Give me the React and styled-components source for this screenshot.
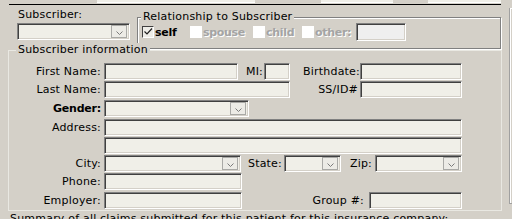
import React from "react";
import styled, { createGlobalStyle } from "styled-components";

const Global = createGlobalStyle`
  html, body {
    margin: 0;
    padding: 0;
    background: #d4d0c8;
    font-family: "DejaVu Sans", Verdana, sans-serif;
    font-size: 11px;
    letter-spacing: 0.2px;
    color: #000;
    overflow: hidden;
  }
`;

const Page = styled.div`
  display: flex;
  width: 512px;
  height: 219px;
  overflow: hidden;
`;

const Main = styled.div`
  width: 509px;
  flex: none;
`;

const SideEdge = styled.div`
  flex: 1;
  margin-top: 8px;
  height: 195px;
  border-left: 1px solid #a0a0a0;
  border-bottom: 1px solid #a0a0a0;
  box-shadow: inset 1px 1px 0 #fff;
`;

const TopStrip = styled.div`
  display: flex;
  height: 4px;
`;

const Stub = styled.div`
  margin-left: ${(p) => p.$ml}px;
  width: ${(p) => p.$w}px;
  height: 2px;
  background: #f0efe8;
  border-bottom: 1px solid #fff;
`;

const Rule = styled.div`
  margin-left: 9px;
  width: 492px;
  height: 1px;
  background: #000;
`;

const TopRow = styled.div`
  display: flex;
  height: 44px;
`;

const SubscriberCol = styled.div`
  display: flex;
  flex-direction: column;
  margin-left: 17px;
  padding-top: 3px;
  width: 113px;
`;

const Caption = styled.div`
  line-height: 13px;
  margin-left: 1px;
  margin-bottom: 2px;
`;

const Group = styled.div`
  display: flex;
  flex-direction: column;
  margin-left: ${(p) => p.$ml}px;
  margin-top: ${(p) => p.$mt}px;
  width: ${(p) => p.$w}px;
  height: ${(p) => p.$h}px;
  box-sizing: border-box;
  border: 1px solid ${(p) => (p.$light ? "#e9e8e2" : "#808080")};
  box-shadow: ${(p) =>
    p.$light ? "none" : "inset 1px 1px 0 #fff, 1px 1px 0 #fff"};
`;

const Legend = styled.div`
  align-self: flex-start;
  margin-top: -8px;
  margin-left: ${(p) => p.$ml}px;
  padding: 0 2px;
  line-height: 13px;
  background: #d4d0c8;
  white-space: nowrap;
`;

const CheckRow = styled.div`
  display: flex;
  align-items: center;
  height: 18px;
  padding-left: 4px;
`;

const CheckItem = styled.div`
  display: flex;
  align-items: center;
  width: ${(p) => p.$w}px;
  flex: none;
`;

const Box = styled.div`
  width: 12px;
  height: 12px;
  box-sizing: border-box;
  flex: none;
  background: ${(p) => (p.$on ? "#eeede8" : "#fff")};
  border: ${(p) => (p.$on ? "1px solid" : "none")};
  border-color: #404040 #fff #fff #404040;
  display: flex;
  align-items: center;
  justify-content: center;
`;

const CheckText = styled.span`
  font-weight: bold;
  margin-left: 1px;
  color: ${(p) => (p.$off ? "#a4a4a4" : "#000")};
  text-shadow: ${(p) => (p.$off ? "1px 1px 0 #fff" : "none")};
  letter-spacing: -0.3px;
`;

const Field = styled.div`
  flex: none;
  width: ${(p) => p.$w}px;
  height: ${(p) => p.$h || 17}px;
  box-sizing: border-box;
  background: ${(p) => p.$bg || "#f0efe8"};
  border: 1px solid;
  border-color: #808080 #fff #fff #808080;
  box-shadow: inset 1px 1px 0 #404040, inset -1px -1px 0 #d4d0c8;
  display: flex;
  justify-content: flex-end;
  align-items: center;
  padding-right: 2px;
`;

const DropBtn = styled.div`
  width: 16px;
  height: 13px;
  box-sizing: border-box;
  background: #ecebe6;
  border: 1px solid #a9a9a6;
  display: flex;
  align-items: flex-end;
  justify-content: center;
  padding-bottom: 2px;
`;

const Form = styled.div`
  display: flex;
  flex-direction: column;
  padding-top: 7px;
`;

const Row = styled.div`
  display: flex;
  height: ${(p) => p.$h}px;
`;

const Label = styled.div`
  flex: none;
  width: ${(p) => p.$w}px;
  padding-right: ${(p) => p.$pr || 0}px;
  box-sizing: border-box;
  text-align: right;
  line-height: 17px;
  font-weight: ${(p) => (p.$bold ? "bold" : "normal")};
  letter-spacing: ${(p) => (p.$bold ? "-0.2px" : "0.2px")};
  white-space: nowrap;
`;

const Summary = styled.div`
  margin-left: 10px;
  margin-top: 1px;
  line-height: 13px;
  white-space: nowrap;
`;

function Chevron() {
  return (
    <svg width="7" height="4" viewBox="0 0 7 4">
      <path d="M0.5 0.5 L3.5 3.5 L6.5 0.5" fill="none" stroke="#7a7a7a" strokeWidth="1" />
    </svg>
  );
}

function Select({ w }) {
  return (
    <Field $w={w}>
      <DropBtn>
        <Chevron />
      </DropBtn>
    </Field>
  );
}

function Check({ w, label, on, off }) {
  return (
    <CheckItem $w={w}>
      <Box $on={on}>
        {on && (
          <svg width="10" height="10" viewBox="0 0 10 10">
            <path d="M1.5 4.5 L4 7 L9 1.5" fill="none" stroke="#202020" strokeWidth="1.2" />
          </svg>
        )}
      </Box>
      <CheckText $off={off}>{label}</CheckText>
    </CheckItem>
  );
}

export default function App() {
  return (
    <>
      <Global />
      <Page>
        <Main>
          <TopStrip>
            <Stub $ml={97} $w={158} />
            <Stub $ml={66} $w={72} />
            <Stub $ml={35} $w={73} />
          </TopStrip>
          <Rule />
          <TopRow>
            <SubscriberCol>
              <Caption>Subscriber:</Caption>
              <Select w={113} />
            </SubscriberCol>
            <Group $ml={7} $mt={12} $w={364} $h={32}>
              <Legend $ml={3}>Relationship to Subscriber</Legend>
              <CheckRow>
                <Check w={48} label="self" on />
                <Check w={63} label="spouse" off />
                <Check w={49} label="child" off />
                <Check w={54} label="other:" off />
                <Field $w={50} $h={18} $bg="#efefef" />
              </CheckRow>
            </Group>
          </TopRow>
          <Group $light $ml={8} $mt={1} $w={494} $h={161}>
            <Legend $ml={7}>Subscriber information</Legend>
            <Form>
              <Row $h={18}>
                <Label $w={95} $pr={3}>First Name:</Label>
                <Field $w={134} />
                <Label $w={26} $pr={1}>MI:</Label>
                <Field $w={26} />
                <Label $w={70} $pr={0}>Birthdate:</Label>
                <Field $w={102} />
              </Row>
              <Row $h={19}>
                <Label $w={95} $pr={3}>Last Name:</Label>
                <Field $w={186} />
                <Label $w={70} $pr={2}>SS/ID#</Label>
                <Field $w={102} />
              </Row>
              <Row $h={19}>
                <Label $w={95} $pr={3} $bold>Gender:</Label>
                <Select w={145} />
              </Row>
              <Row $h={18}>
                <Label $w={95} $pr={3}>Address:</Label>
                <Field $w={358} />
              </Row>
              <Row $h={18}>
                <Label $w={95} />
                <Field $w={358} />
              </Row>
              <Row $h={18}>
                <Label $w={95} $pr={3}>City:</Label>
                <Select w={137} />
                <Label $w={43} $pr={2}>State:</Label>
                <Select w={57} />
                <Label $w={34} $pr={3}>Zip:</Label>
                <Select w={87} />
              </Row>
              <Row $h={19}>
                <Label $w={95} $pr={3}>Phone:</Label>
                <Field $w={138} />
              </Row>
              <Row $h={17}>
                <Label $w={95} $pr={3}>Employer:</Label>
                <Field $w={138} />
                <Label $w={127} $pr={5}>Group #:</Label>
                <Field $w={93} />
              </Row>
            </Form>
          </Group>
          <Summary>Summary of all claims submitted for this patient for this insurance company:</Summary>
        </Main>
        <SideEdge />
      </Page>
    </>
  );
}
